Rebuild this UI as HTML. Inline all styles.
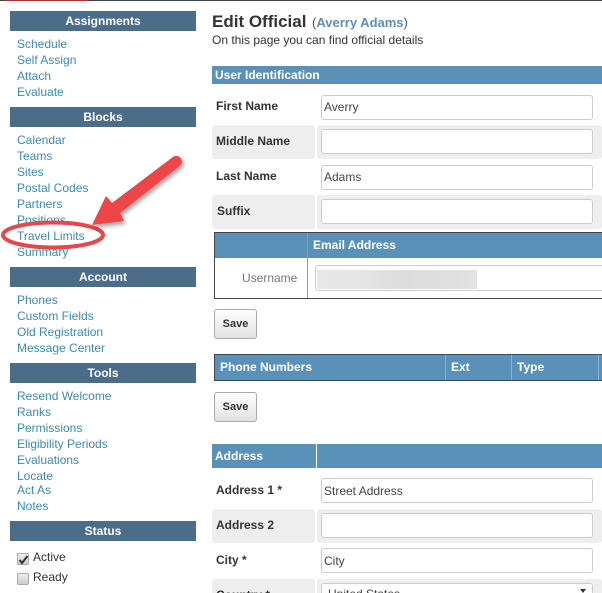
<!DOCTYPE html>
<html><head><meta charset="utf-8">
<style>
html,body{margin:0;padding:0;background:#fff;width:602px;height:593px;overflow:hidden}
#w{width:602px;height:593px;position:relative;overflow:hidden;font-family:"Liberation Sans",sans-serif;font-size:12px;color:#333;background:#fff}
.a{position:absolute;white-space:nowrap}
.h{position:absolute;left:10px;width:186px;height:20px;line-height:21px;background:#4b6d8a;color:#fff;font-weight:bold;text-align:center;font-size:12px}
.l{position:absolute;left:17px;color:#3b8bae;line-height:16px;white-space:nowrap}
.bar{position:absolute;background:#5a91b8;color:#fff;font-weight:bold}
.g{position:absolute;background:#eee;border-radius:3px}
.lb{position:absolute;left:216px;font-weight:bold;line-height:16px;color:#333;white-space:nowrap}
.i{position:absolute;left:321px;width:270px;height:23px;border:1px solid #ccc;border-radius:3px;background:#fff;line-height:22px;text-indent:2px;color:#444;white-space:nowrap;overflow:hidden;box-sizing:content-box}
.b{position:absolute;left:214px;width:41px;height:28px;border:1px solid #aaa;border-radius:3px;background:linear-gradient(#fff,#e2e2e2);text-align:center;line-height:28px;font-weight:bold;font-size:11px;color:#333}
.c{position:absolute;left:17px;width:10px;height:10px;border:1px solid #aaa;border-radius:2px;background:linear-gradient(#eee,#ccc)}
</style></head><body><div id="w">
<div class="a" style="left:0;top:0;width:602px;height:1px;background:#444"></div>
<div class="a" style="left:6px;top:0;width:82px;height:1px;background:#b03030"></div>

<div class="h" style="top:11px">Assignments</div>
<div class="l" style="top:36px">Schedule</div>
<div class="l" style="top:52px">Self Assign</div>
<div class="l" style="top:68px">Attach</div>
<div class="l" style="top:84px">Evaluate</div>
<div class="h" style="top:107px">Blocks</div>
<div class="l" style="top:132px">Calendar</div>
<div class="l" style="top:148px">Teams</div>
<div class="l" style="top:164px">Sites</div>
<div class="l" style="top:180px">Postal Codes</div>
<div class="l" style="top:196px">Partners</div>
<div class="l" style="top:212px">Positions</div>
<div class="l" style="top:244px">Summary</div>
<svg class="a" style="left:0;top:150px" width="200" height="110" viewBox="0 150 200 110">
<ellipse cx="53" cy="235" rx="50" ry="12.500" fill="#fff" stroke="#e5484a" stroke-width="4"/>
</svg>
<div class="l" style="top:228px">Travel Limits</div>
<svg class="a" style="left:0;top:150px;filter:drop-shadow(2px 3px 2px rgba(0,0,0,.35))" width="200" height="110" viewBox="0 150 200 110">
<path d="M173.500 156.500Q179 154.500 181.500 159.500Q183 163 179.500 166L120 213L124 221L92 225L106 196L112 203Z" fill="#ee4648"/>
</svg>
<div class="h" style="top:267px">Account</div>
<div class="l" style="top:292px">Phones</div>
<div class="l" style="top:308px">Custom Fields</div>
<div class="l" style="top:324px">Old Registration</div>
<div class="l" style="top:340px">Message Center</div>
<div class="h" style="top:363px">Tools</div>
<div class="l" style="top:388px">Resend Welcome</div>
<div class="l" style="top:404px">Ranks</div>
<div class="l" style="top:420px">Permissions</div>
<div class="l" style="top:436px">Eligibility Periods</div>
<div class="l" style="top:452px">Evaluations</div>
<div class="l" style="top:468px">Locate</div>
<div class="l" style="top:482px">Act As</div>
<div class="l" style="top:498px">Notes</div>
<div class="h" style="top:521px">Status</div>
<div class="c" style="top:553px"></div>
<svg class="a" style="left:18px;top:554px" width="11" height="11" viewBox="0 0 11 11"><path d="M1.500 6L4 9L9.500 2" fill="none" stroke="#333" stroke-width="2"/></svg>
<div class="a" style="left:33px;top:549px;line-height:16px">Active</div>
<div class="c" style="top:573px"></div>
<div class="a" style="left:33px;top:569px;line-height:16px">Ready</div>

<div class="a" style="left:212px;top:12px;font-size:17px;font-weight:bold;line-height:20px;color:#333">Edit Official</div>
<div class="a" style="left:312px;top:14px;font-size:13px;line-height:18px;color:#555">(<b style="color:#5f8fb5">Averry Adams</b>)</div>
<div class="a" style="left:212px;top:32px;line-height:16px;color:#333">On this page you can find official details</div>

<div class="bar" style="left:212px;top:66px;width:390px;height:18px;line-height:19px;text-indent:3px">User Identification</div>
<div class="lb" style="top:98px">First Name</div>
<div class="i" style="top:95px">Averry</div>
<div class="g" style="left:212px;top:125px;width:103px;height:34px"></div>
<div class="g" style="left:317px;top:125px;width:285px;height:34px"></div>
<div class="lb" style="top:133px">Middle Name</div>
<div class="i" style="top:129px"></div>
<div class="lb" style="top:168px">Last Name</div>
<div class="i" style="top:165px">Adams</div>
<div class="g" style="left:212px;top:195px;width:103px;height:34px"></div>
<div class="g" style="left:317px;top:195px;width:285px;height:34px"></div>
<div class="lb" style="top:203px;left:217px">Suffix</div>
<div class="i" style="top:199px"></div>

<div class="a" style="left:214px;top:232px;width:388px;height:65px;border:1px solid #444;border-right:0"></div>
<div class="bar" style="left:215px;top:233px;width:387px;height:25px"></div>
<div class="a" style="left:307px;top:233px;width:1px;height:65px;background:#999"></div>
<div class="bar" style="left:313px;top:237px;background:none;line-height:17px">Email Address</div>
<div class="a" style="left:242px;top:270px;line-height:16px;color:#777">Username</div>
<div class="a" style="left:315px;top:265px;width:290px;height:24px;border:1px solid #ccc;border-radius:3px;background:#fff"></div>
<div class="a" style="left:317px;top:270px;width:160px;height:19px;background:linear-gradient(90deg,#e8e8e8,#e6e6e6 25%,#dcdcdc 55%,#e2e2e2 100%)"></div>

<div class="b" style="top:309px">Save</div>

<div class="bar" style="left:214px;top:354px;width:388px;height:25px;border-top:1px solid #3d4a55;border-bottom:1px solid #3d4a55;border-left:1px solid #3d4a55"></div>
<div class="a" style="left:445px;top:355px;width:1px;height:25px;background:#8fb2cb"></div>
<div class="a" style="left:511px;top:355px;width:1px;height:25px;background:#8fb2cb"></div>
<div class="a" style="left:598px;top:355px;width:1px;height:25px;background:#8fb2cb"></div>
<div class="a" style="left:220px;top:359px;color:#fff;font-weight:bold;line-height:17px">Phone Numbers</div>
<div class="a" style="left:451px;top:359px;color:#fff;font-weight:bold;line-height:17px">Ext</div>
<div class="a" style="left:517px;top:359px;color:#fff;font-weight:bold;line-height:17px">Type</div>

<div class="b" style="top:392px">Save</div>

<div class="bar" style="left:212px;top:444px;width:104px;height:24px;line-height:25px;text-indent:3px">Address</div>
<div class="bar" style="left:317px;top:444px;width:285px;height:24px"></div>
<div class="lb" style="top:482px">Address 1 *</div>
<div class="i" style="top:478px;line-height:24px">Street Address</div>
<div class="g" style="left:212px;top:509px;width:103px;height:34px"></div>
<div class="g" style="left:317px;top:509px;width:285px;height:34px"></div>
<div class="lb" style="top:517px">Address 2</div>
<div class="i" style="top:513px"></div>
<div class="lb" style="top:552px">City *</div>
<div class="i" style="top:548px;line-height:24px">City</div>
<div class="g" style="left:212px;top:579px;width:103px;height:14px;border-radius:3px 3px 0 0"></div>
<div class="g" style="left:317px;top:579px;width:285px;height:14px;border-radius:3px 3px 0 0"></div>
<div class="lb" style="top:587px">Country *</div>
<div class="i" style="top:583px;height:10px;border-bottom:0;border-radius:3px 3px 0 0;text-indent:6px;line-height:20px">United States</div>
<div class="a" style="left:580px;top:589px;width:0;height:0;border-left:3.500px solid transparent;border-right:3.500px solid transparent;border-top:4px solid #333"></div>
</div></body></html>
